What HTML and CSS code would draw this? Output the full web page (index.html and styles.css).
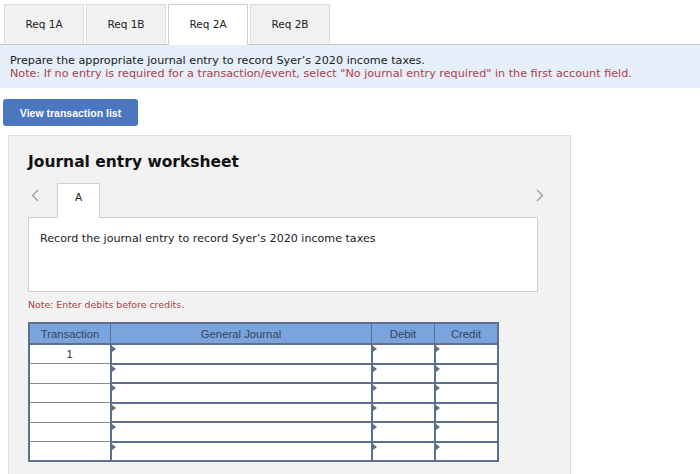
FILE: index.html
```html
<!DOCTYPE html>
<html lang="en">
<head>
    <meta charset="UTF-8">
    <meta name="viewport" content="width=device-width, initial-scale=1.0">
    <title>Req 2A</title>
    <link rel="stylesheet" href="styles.css">
</head>
<body>

    <!-- Вкладки заданий -->
    <div class="req-tabs">
        <div class="req-tab">Req 1A</div>
        <div class="req-tab">Req 1B</div>
        <div class="req-tab active">Req 2A</div>
        <div class="req-tab">Req 2B</div>
    </div>

    <div class="prompt">
        <p>Prepare the appropriate journal entry to record Syer’s 2020 income taxes.</p>
        <p class="red">Note: If no entry is required for a transaction/event, select "No journal entry required" in the first account field.</p>
    </div>

    <button class="view-btn">View transaction list</button>

    <div class="worksheet">
        <h2>Journal entry worksheet</h2>

        <div class="entry-nav">
            <svg class="arrow" width="8" height="13" viewBox="0 0 8 13"><path d="M7 1 L1.5 6.5 L7 12" fill="none" stroke="#9a9a9a" stroke-width="1.3"/></svg>
            <div class="entry-tab">A</div>
            <svg class="arrow right" width="8" height="13" viewBox="0 0 8 13"><path d="M1 1 L6.5 6.5 L1 12" fill="none" stroke="#9a9a9a" stroke-width="1.3"/></svg>
        </div>

        <div class="entry-box">Record the journal entry to record Syer’s 2020 income taxes</div>

        <p class="note">Note: Enter debits before credits.</p>

        <table class="journal">
            <thead>
                <tr>
                    <th class="c-tr">Transaction</th>
                    <th class="c-gj">General Journal</th>
                    <th class="c-num">Debit</th>
                    <th class="c-num">Credit</th>
                </tr>
            </thead>
            <tbody>
                <tr><td>1</td><td class="inp"></td><td class="inp"></td><td class="inp"></td></tr>
                <tr><td></td><td class="inp"></td><td class="inp"></td><td class="inp"></td></tr>
                <tr><td></td><td class="inp"></td><td class="inp"></td><td class="inp"></td></tr>
                <tr><td></td><td class="inp"></td><td class="inp"></td><td class="inp"></td></tr>
                <tr><td></td><td class="inp"></td><td class="inp"></td><td class="inp"></td></tr>
                <tr><td></td><td class="inp"></td><td class="inp"></td><td class="inp"></td></tr>
            </tbody>
        </table>
    </div>

</body>
</html>
```

FILE: styles.css
```css
body {
    margin: 0;
    font-family: "DejaVu Sans", Verdana, sans-serif;
    color: #222;
    background: #fff;
}
.req-tabs {
    display: flex;
    gap: 2px;
    padding: 4px 0 0 4px;
    border-bottom: 1px solid #c9c9c9;
}
.req-tab {
    width: 78px;
    height: 39px;
    line-height: 39px;
    text-align: center;
    font-size: 10.5px;
    background: #f1f1f1;
    border: 1px solid #dcdcdc;
    border-bottom: none;
    margin-bottom: -1px;
}
.req-tab.active {
    background: #fff;
    border-color: #cfcfcf;
    height: 40px;
}
.prompt {
    background: #e5eef9;
    padding: 9px 10px 8px;
    font-size: 11.2px;
    line-height: 13px;
}
.prompt p {
    margin: 0;
}
.prompt .red {
    color: #b0404a;
}
.view-btn {
    display: block;
    margin: 11px 0 0 3px;
    width: 135px;
    height: 27px;
    background: #4a77bf;
    color: #fff;
    border: none;
    border-radius: 3px;
    font-family: "Liberation Sans", Arial, sans-serif;
    font-weight: bold;
    font-size: 10.5px;
    padding: 0;
    cursor: pointer;
}
.worksheet {
    margin: 9px 0 0 8px;
    width: 542px;
    height: 345px;
    padding: 0 0 0 19px;
    background: #f2f2f2;
    border: 1px solid #dcdcdc;
}
.worksheet h2 {
    margin: 16px 0 0;
    font-size: 15.5px;
    line-height: 20px;
    font-weight: bold;
    color: #111;
}
.entry-nav {
    display: flex;
    align-items: flex-end;
    margin-top: 10px;
    width: 516px;
    height: 35px;
}
.arrow {
    align-self: flex-start;
    margin: 7px 18px 0 3px;
}
.arrow.right {
    margin-left: auto;
    margin-right: 0;
}
.entry-tab {
    width: 43px;
    height: 35px;
    box-sizing: border-box;
    padding-top: 7px;
    text-align: center;
    font-size: 10.5px;
    background: #fff;
    border: 1px solid #cfcfcf;
    border-bottom: none;
    margin-bottom: -1px;
    position: relative;
}
.entry-box {
    width: 497px;
    height: 59px;
    padding: 14px 0 0 11px;
    background: #fff;
    border: 1px solid #cfcfcf;
    font-size: 11.1px;
}
.note {
    margin: 7px 0 0;
    font-size: 9.4px;
    color: #a9414a;
}
.journal {
    margin-top: 12px;
    border-collapse: collapse;
    font-family: "Liberation Sans", Arial, sans-serif;
    font-size: 11.3px;
    color: #333;
    border: 2px solid #5d6f8d;
}
.journal th {
    background: #7aa4de;
    font-weight: normal;
    color: #34435c;
    height: 19px;
    padding: 0;
    border: 1px solid #5d6f8d;
    border-bottom: 2px solid #5d6f8d;
}
.journal td {
    background: #fff;
    height: 17.5px;
    padding: 0;
    text-align: center;
    border: 1px solid #5d6f8d;
    border-bottom: 2px solid #5d6f8d;
    border-left: 2px solid #5d6f8d;
}
.journal td:first-child {
    border-color: #8a8a8a;
    border-bottom-width: 1px;
    border-left-width: 1px;
}
.c-tr { width: 80px; }
.c-gj { width: 260px; }
.c-num { width: 62px; }
.journal td.inp {
    position: relative;
}
.journal td.inp::before {
    content: "";
    position: absolute;
    left: 0;
    top: 1px;
    border-left: 4px solid #5d6f8d;
    border-top: 3px solid transparent;
    border-bottom: 3px solid transparent;
}
```
